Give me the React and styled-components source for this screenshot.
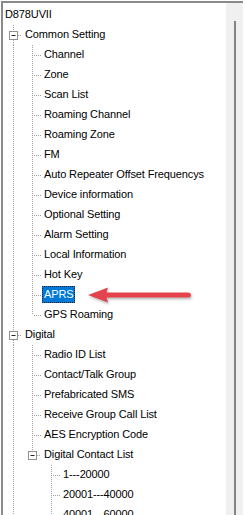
import styled, { createGlobalStyle } from "styled-components";

const GlobalStyle = createGlobalStyle`
  html, body {
    margin: 0;
    padding: 0;
    background: #ffffff;
  }
  body {
    font-family: "Liberation Sans", Arial, sans-serif;
  }
`;

const Frame = styled.div`
  display: flex;
  width: 240px;
  height: 512px;
  margin: 1px 0 0 1px;
  border-top: 2px solid #8a8a8a;
  border-left: 2px solid #8a8a8a;
  overflow: hidden;
`;

const Tree = styled.div`
  flex: 1;
  display: flex;
  flex-direction: column;
  padding-top: 2px;
  overflow: hidden;
`;

const Row = styled.div`
  position: relative;
  display: flex;
  align-items: flex-start;
  height: 20px;
  flex-shrink: 0;
`;

const Label = styled.span`
  display: inline-block;
  height: 15px;
  line-height: 15px;
  margin-top: 1px;
  margin-left: ${(p) => (p.$root ? "0" : "1px")};
  padding: 0 1px;
  border: 1px ${(p) => (p.$selected ? "dotted #222" : "solid transparent")};
  background: ${(p) => (p.$selected ? "#0078d7" : "transparent")};
  color: ${(p) => (p.$selected ? "#ffffff" : "#000000")};
  font-size: 11px;
  letter-spacing: -0.12px;
  white-space: nowrap;
`;

const Scrollbar = styled.div`
  width: 17px;
  flex-shrink: 0;
  background: #f0f0f0;
  padding-top: 18px;
  display: flex;
  justify-content: center;
`;

const Thumb = styled.div`
  width: 2px;
  height: 100%;
  margin-left: 1px;
  background: #858585;
`;

const Arrow = styled.svg`
  position: absolute;
  left: 83px;
  top: -1px;
  filter: drop-shadow(1px 2px 1px rgba(0, 0, 0, 0.25));
`;

const LINE = "#a0a0a0";

// one 19px indent cell with the dotted tree lines
const Guide = ({ kind }) => {
  const up = kind !== "blank";
  const down = kind === "pipe" || kind === "tee" || kind === "boxTee";
  const across = kind === "tee" || kind === "ell" || kind === "boxTee" || kind === "boxEll";
  const box = kind === "boxTee" || kind === "boxEll";
  return (
    <svg width="19" height="20" style={{ flexShrink: 0 }}>
      {up && (
        <line x1="10.5" y1="0" x2="10.5" y2={box ? 6 : down ? 20 : 10} stroke={LINE} strokeDasharray="1 1" />
      )}
      {box && down && <line x1="10.5" y1="15" x2="10.5" y2="20" stroke={LINE} strokeDasharray="1 1" />}
      {across && (
        <line x1={box ? 15 : 12} y1="10.5" x2="19" y2="10.5" stroke={LINE} strokeDasharray="1 1" />
      )}
      {box && (
        <g>
          <rect x="6.5" y="6.5" width="8" height="8" fill="#fff" stroke="#919191" />
          <line x1="8.5" y1="10.5" x2="12.5" y2="10.5" stroke="#222" />
        </g>
      )}
    </svg>
  );
};

const items = [
  { label: "D878UVII", guides: [] },
  { label: "Common Setting", guides: ["boxTee"] },
  { label: "Channel", guides: ["pipe", "tee"] },
  { label: "Zone", guides: ["pipe", "tee"] },
  { label: "Scan List", guides: ["pipe", "tee"] },
  { label: "Roaming Channel", guides: ["pipe", "tee"] },
  { label: "Roaming Zone", guides: ["pipe", "tee"] },
  { label: "FM", guides: ["pipe", "tee"] },
  { label: "Auto Repeater Offset Frequencys", guides: ["pipe", "tee"] },
  { label: "Device information", guides: ["pipe", "tee"] },
  { label: "Optional Setting", guides: ["pipe", "tee"] },
  { label: "Alarm Setting", guides: ["pipe", "tee"] },
  { label: "Local Information", guides: ["pipe", "tee"] },
  { label: "Hot Key", guides: ["pipe", "tee"] },
  { label: "APRS", guides: ["pipe", "tee"], selected: true },
  { label: "GPS Roaming", guides: ["pipe", "ell"] },
  { label: "Digital", guides: ["boxTee"] },
  { label: "Radio ID List", guides: ["pipe", "tee"] },
  { label: "Contact/Talk Group", guides: ["pipe", "tee"] },
  { label: "Prefabricated SMS", guides: ["pipe", "tee"] },
  { label: "Receive Group Call List", guides: ["pipe", "tee"] },
  { label: "AES Encryption Code", guides: ["pipe", "tee"] },
  { label: "Digital Contact List", guides: ["pipe", "boxEll"] },
  { label: "1---20000", guides: ["pipe", "blank", "tee"] },
  { label: "20001---40000", guides: ["pipe", "blank", "tee"] },
  { label: "40001---60000", guides: ["pipe", "blank", "tee"] },
];

const App = () => {
  return (
    <>
      <GlobalStyle />
      <Frame>
        <Tree>
          {items.map((item) => (
            <Row key={item.label}>
              {item.guides.map((g, i) => (
                <Guide key={i} kind={g} />
              ))}
              <Label $root={item.guides.length === 0} $selected={item.selected}>
                {item.label}
              </Label>
              {item.selected && (
                <Arrow width="110" height="22" viewBox="0 0 110 22">
                  <path d="M2 11 L22 3.5 L20.5 8.5 L102 8.5 Q105 8.5 105 11 Q105 13.5 102 13.5 L20.5 13.5 L22 18.5 Z" fill="#e5434b" />
                </Arrow>
              )}
            </Row>
          ))}
        </Tree>
        <Scrollbar>
          <Thumb />
        </Scrollbar>
      </Frame>
    </>
  );
};

export default App;
